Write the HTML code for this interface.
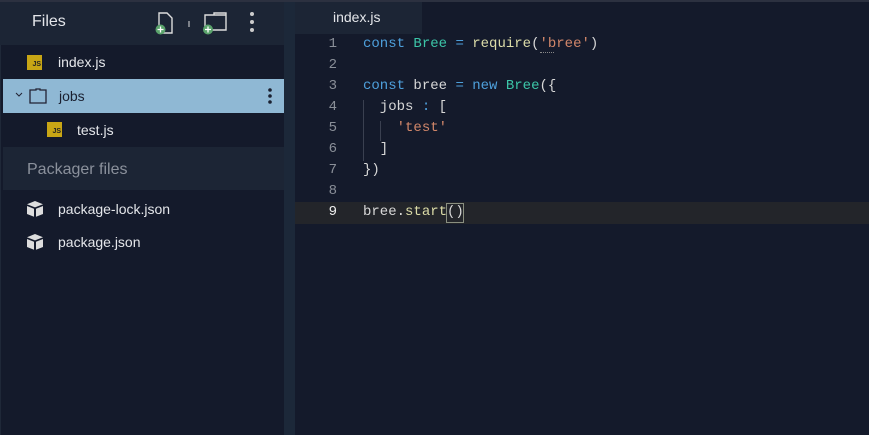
<!DOCTYPE html>
<html><head><style>
*{margin:0;padding:0;box-sizing:border-box}
body{width:869px;height:435px;background:#141a2b;position:relative;overflow:hidden;font-family:"Liberation Sans",sans-serif;color:#e4e6ea}
.a{position:absolute}
.mono{font-family:"Liberation Mono","DejaVu Sans Mono",monospace;font-size:14px}
.ln{position:absolute;left:300px;width:37px;text-align:right;color:#8a8f98}
.cd{position:absolute;left:363px;white-space:pre;color:#d8d8d8}
.k{color:#4ea0dc}.c{color:#3cc6a8}.f{color:#dcdca8}.s{color:#d2876a}
.js{position:absolute;width:15px;height:15px;background:#c8a615;color:#222;font-size:7px;font-weight:bold;text-align:right;padding:6px 1px 0 0;line-height:8px}
.fn{position:absolute;font-size:14px;color:#e4e6ea}
</style></head><body>
<div class="a" style="left:0;top:0;width:869px;height:2px;background:#2c3140"></div>
<div class="a" style="left:0;top:2px;width:284px;height:433px;background:#141a2b;border-left:1px solid #1f2838"></div>
<div class="a" style="left:0;top:2px;width:295px;height:43px;background:#1c2535"></div>
<div class="a" style="left:284px;top:2px;width:11px;height:433px;background:#1c2839"></div>
<div class="a" style="left:295px;top:2px;width:127px;height:32px;background:#1c2535"></div>
<div class="a" style="left:333px;top:9px;font-size:14px;color:#e4e6ea">index.js</div>
<div class="a" style="left:32px;top:13px;font-size:16px">Files</div>
<svg class="a" style="left:150px;top:8px" width="110" height="30">
<path d="M9 5h8l5 5v15H9z" fill="none" stroke="#ddd" stroke-width="1.4"/>
<circle cx="10.5" cy="21.5" r="5" fill="#5aa36b"/><path d="M10.5 18.5v6M7.5 21.5h6" stroke="#fff" stroke-width="1.3"/>
<path d="M39 13v6" stroke="#ddd" stroke-width="1"/>
<path d="M55 7h21v15H55zM64 7V5h12v2" fill="none" stroke="#ddd" stroke-width="1.4"/>
<circle cx="58" cy="21.5" r="5" fill="#5aa36b"/><path d="M58 18.5v6M55 21.5h6" stroke="#fff" stroke-width="1.3"/>
<circle cx="102" cy="6" r="2" fill="#ccc"/><circle cx="102" cy="14" r="2" fill="#ccc"/><circle cx="102" cy="22" r="2" fill="#ccc"/>
</svg>
<div class="js" style="left:27px;top:55px">JS</div>
<div class="fn" style="left:58px;top:54px">index.js</div>
<div class="a" style="left:3px;top:79px;width:281px;height:34px;background:#8fb8d4"></div>
<svg class="a" style="left:14px;top:86px" width="40" height="20"><path d="M2 7l3 3 3-3" fill="none" stroke="#223" stroke-width="1"/><path d="M16 4h6v-1h4v1h6v13H16z" fill="none" stroke="#223" stroke-width="1.3"/></svg>
<div class="fn" style="left:59px;top:88px;color:#1a2030">jobs</div>
<svg class="a" style="left:267px;top:87px" width="6" height="20"><circle cx="3" cy="3" r="1.8" fill="#1a2030"/><circle cx="3" cy="9" r="1.8" fill="#1a2030"/><circle cx="3" cy="15" r="1.8" fill="#1a2030"/></svg>
<div class="js" style="left:47px;top:122px">JS</div>
<div class="fn" style="left:77px;top:122px">test.js</div>
<div class="a" style="left:3px;top:147px;width:281px;height:43px;background:#1c2535"></div>
<div class="a" style="left:27px;top:161px;font-size:16px;color:#8b919c">Packager files</div>
<svg class="a" style="left:26px;top:200px" width="18" height="18"><path d="M9 1l8 3.2-8 3.2-8-3.2z" fill="#ddd"/><path d="M1 6l7 2.8v8L1 14zM17 6l-7 2.8v8l7-2.8z" fill="#ddd"/></svg>
<div class="fn" style="left:58px;top:201px">package-lock.json</div>
<svg class="a" style="left:26px;top:233px" width="18" height="18"><path d="M9 1l8 3.2-8 3.2-8-3.2z" fill="#ddd"/><path d="M1 6l7 2.8v8L1 14zM17 6l-7 2.8v8l7-2.8z" fill="#ddd"/></svg>
<div class="fn" style="left:58px;top:234px">package.json</div>
<div class="a" style="left:295px;top:202px;width:574px;height:22px;background:#23252a"></div>
<div class="a" style="left:363px;top:100px;width:1px;height:61px;background:#3a4050"></div>
<div class="a" style="left:380px;top:121px;width:1px;height:20px;background:#3a4050"></div>
<div class="a" style="left:446px;top:203px;width:18px;height:20px;border:1px solid #8a8f80"></div>
<div class="mono">
<div class="ln" style="top:36px">1</div><div class="ln" style="top:57px">2</div><div class="ln" style="top:78px">3</div><div class="ln" style="top:99px">4</div><div class="ln" style="top:120px">5</div><div class="ln" style="top:141px">6</div><div class="ln" style="top:162px">7</div><div class="ln" style="top:183px">8</div><div class="ln" style="top:204px;color:#eee">9</div>
<div class="cd" style="top:36px"><span class="k">const</span> <span class="c">Bree</span> <span class="k">=</span> <span class="f">require</span>(<span class="s">'bree'</span>)</div>
<div class="cd" style="top:78px"><span class="k">const</span> bree <span class="k">=</span> <span class="k">new</span> <span class="c">Bree</span>({</div>
<div class="cd" style="top:99px">  jobs <span class="k">:</span> [</div>
<div class="cd" style="top:120px">    <span class="s">'test'</span></div>
<div class="cd" style="top:141px">  ]</div>
<div class="cd" style="top:162px">})</div>
<div class="cd" style="top:204px">bree.<span class="f">start</span>()</div>
</div>
<div class="a" style="left:540px;top:52px;width:14px;border-top:1px dotted #888"></div>
</body></html>
